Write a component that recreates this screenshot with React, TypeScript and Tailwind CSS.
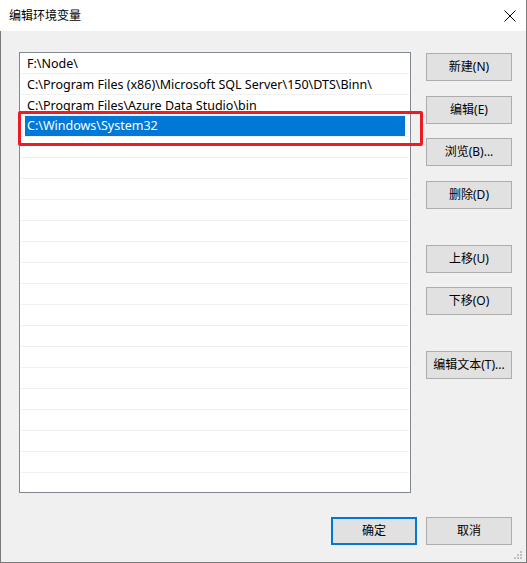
import React from 'react';

const paths = [
  'F:\\Node\\',
  'C:\\Program Files (x86)\\Microsoft SQL Server\\150\\DTS\\Binn\\',
  'C:\\Program Files\\Azure Data Studio\\bin',
  'C:\\Windows\\System32',
];

const font = { fontFamily: '"Noto Sans", "Noto Sans CJK SC", sans-serif' };

function Btn({ label, className = '' }: { label: string; className?: string }) {
  return (
    <button className={`w-[86px] h-[28px] bg-[#e1e1e1] border border-[#adadad] text-[12px] text-black flex items-center justify-center ${className}`}>
      {label}
    </button>
  );
}

export default function App() {
  const rows = Array.from({ length: 21 }, (_, i) => paths[i] ?? '');

  return (
    <div className="w-[527px] h-[563px] flex flex-col text-[12px] text-black" style={font}>
      {/* title bar */}
      <div className="h-[31px] bg-white border-r border-[#7a7a7a] flex items-center justify-between pl-[9px] pr-[9px]">
        <span>编辑环境变量</span>
        <svg width="12" height="12" viewBox="0 0 12 12" className="mr-[1px]">
          <path d="M0.5 0.5 L11.5 11.5 M11.5 0.5 L0.5 11.5" stroke="#000" strokeWidth="1" />
        </svg>
      </div>

      {/* body */}
      <div className="relative flex-1 bg-[#f0f0f0] border-l border-r border-b border-[#7a7a7a] flex flex-col pl-[18px] pr-[14px] pt-[21px]">
        <div className="flex">
          <div className="w-[392px] h-[441px] bg-white border border-[#828790] overflow-hidden text-[12.5px]">
            {rows.map((p, i) => (
              <div key={i} className="h-[21px] border-b border-[#f0f0f0] mx-[1px] flex items-center">
                {i === 3 ? (
                  <div className="mx-[4px] w-full h-[20px] bg-[#0078d7] text-white flex items-center pl-[2px] pt-[1px]">{p}</div>
                ) : (
                  <span className="pl-[6px] pt-[2px]">{p}</span>
                )}
              </div>
            ))}
          </div>
          <div className="flex flex-col ml-[15px]">
            <Btn label="新建(N)" className="mt-[1px]" />
            <Btn label="编辑(E)" className="mt-[15px]" />
            <Btn label="浏览(B)..." className="mt-[14px]" />
            <Btn label="删除(D)" className="mt-[15px]" />
            <Btn label="上移(U)" className="mt-[36px]" />
            <Btn label="下移(O)" className="mt-[14px]" />
            <Btn label="编辑文本(T)..." className="mt-[36px]" />
          </div>
        </div>

        <div className="flex justify-end gap-[9px] mt-[24px]">
          <button className="w-[86px] h-[28px] bg-[#e1e1e1] border-2 border-[#0078d7] text-[12px] flex items-center justify-center">确定</button>
          <Btn label="取消" />
        </div>

        {/* red annotation box */}
        <div className="absolute left-[17px] top-[80px] w-[405px] h-[35px] border-[3px] border-[#ed1c24] rounded-[2px]" />

        {/* resize grip */}
        <svg className="absolute right-[3px] bottom-[2px]" width="9" height="9" viewBox="0 0 9 9">
          <rect x="6" y="0" width="2" height="2" fill="#c0c0c0" />
          <rect x="3" y="3" width="2" height="2" fill="#c0c0c0" />
          <rect x="6" y="3" width="2" height="2" fill="#c0c0c0" />
          <rect x="0" y="6" width="2" height="2" fill="#c0c0c0" />
          <rect x="3" y="6" width="2" height="2" fill="#c0c0c0" />
          <rect x="6" y="6" width="2" height="2" fill="#c0c0c0" />
        </svg>
      </div>
    </div>
  );
}
